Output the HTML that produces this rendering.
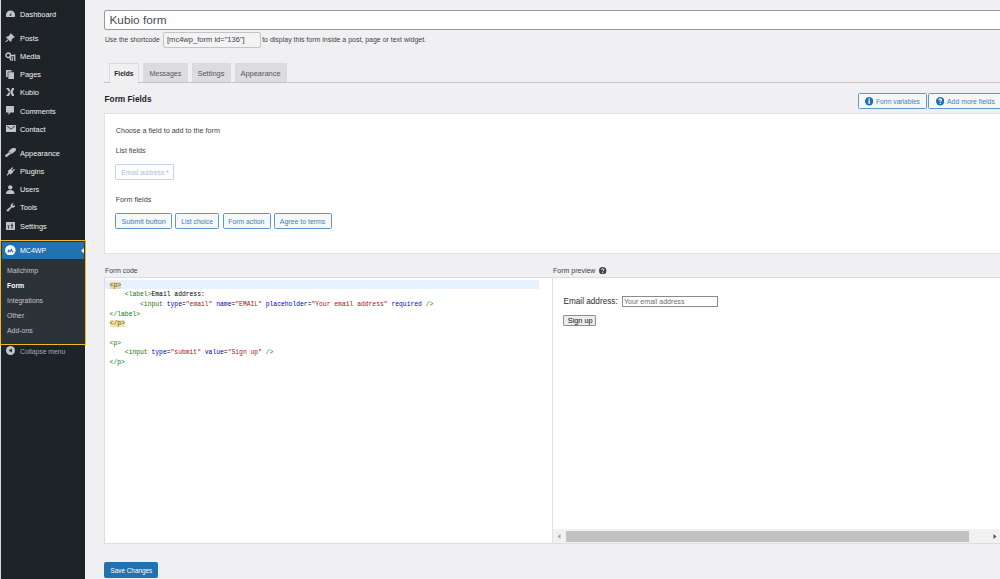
<!DOCTYPE html>
<html><head><meta charset="utf-8">
<style>
*{margin:0;padding:0;box-sizing:border-box}
html,body{width:1000px;height:579px;overflow:hidden;background:#f0f0f2;font-family:"Liberation Sans",sans-serif;position:relative}
.a{position:absolute;white-space:nowrap}
#side{position:absolute;left:0;top:0;width:85.4px;height:579px;background:#1d2327}
.mi{position:absolute;left:20px;font-size:7.4px;color:#f0f0f1;line-height:10px;height:10px}
.ic{position:absolute;left:5px;width:10px;height:10px}
.sub{position:absolute;left:7px;font-size:6.9px;color:#c3c4c7;line-height:10px}
.t{color:#170}.at{color:#00c}.st{color:#a11}.mt{background:rgba(255,150,0,.3)}
</style></head><body>
<div id="side">
  <div class="mi" style="top:9.5px">Dashboard</div>
  <div class="mi" style="top:33.5px">Posts</div>
  <div class="mi" style="top:51.5px">Media</div>
  <div class="mi" style="top:69.5px">Pages</div>
  <div class="mi" style="top:88px">Kubio</div>
  <div class="mi" style="top:106.5px">Comments</div>
  <div class="mi" style="top:124.5px">Contact</div>
  <div class="mi" style="top:149px">Appearance</div>
  <div class="mi" style="top:166.5px">Plugins</div>
  <div class="mi" style="top:185px">Users</div>
  <div class="mi" style="top:203px">Tools</div>
  <div class="mi" style="top:221.5px">Settings</div>
</div>
<!-- MC4WP block -->
<div class="a" style="left:0;top:240.4px;width:85.9px;height:104.6px;border:1.8px solid #ecb82a;background:#2c3338"></div>
<div class="a" style="left:1.8px;top:242.2px;width:82.3px;height:17.1px;background:#2271b1"></div>
<svg class="a" style="left:81.2px;top:247.5px" width="3" height="5.4" viewBox="0 0 4 7" preserveAspectRatio="none"><path d="M4 0 L0 3.5 L4 7 Z" fill="#f0f0f1"/></svg>
<div class="mi" style="top:245.5px;color:#fff;font-size:7px">MC4WP</div>
<div class="sub" style="top:266.4px">Mailchimp</div>
<div class="sub" style="top:281.4px;color:#fff;font-weight:bold">Form</div>
<div class="sub" style="top:296px">Integrations</div>
<div class="sub" style="top:311.4px">Other</div>
<div class="sub" style="top:326px">Add-ons</div>
<div class="mi" style="top:347px;color:#a7aaad;font-size:6.8px">Collapse menu</div>

<svg class="a" style="left:5.9px;top:9.6px" width="9" height="7.6" viewBox="0 0 18 15" preserveAspectRatio="none"><path d="M0 10 A9 9 0 0 1 18 10 L18 12 Q18 15 15 15 L3 15 Q0 15 0 12 Z" fill="#c4c6c9"/><circle cx="9" cy="10" r="2" fill="#1d2327" opacity="0.8"/><path d="M9 9 L11.5 4" stroke="#1d2327" stroke-width="1.3" opacity="0.6"/></svg>
<svg class="a" style="left:5.2px;top:32.6px" width="10.00" height="9.70" viewBox="0 0 20 20" preserveAspectRatio="none"><path d="M11 0 L20 9 L17 10 L13 14 L13 17 L11 18 L2 9 L3 7 L6 7 L10 3 Z" fill="#bfc1c4"/><path d="M6.5 13.5 L0.5 19.5" stroke="#bfc1c4" stroke-width="2.2"/></svg>
<svg class="a" style="left:5.2px;top:52.1px" width="10.5" height="9.5" viewBox="0 0 21 19" preserveAspectRatio="none"><circle cx="6.5" cy="6.5" r="4.6" stroke="#c4c6c9" stroke-width="2.8" fill="none"/><path d="M9.5 10 L11.5 17" stroke="#c4c6c9" stroke-width="2.6"/><path d="M12 7.5 L19.5 6.5 L19.5 18" stroke="#c4c6c9" stroke-width="2.6" fill="none"/><path d="M14.5 10 L14.5 18" stroke="#c4c6c9" stroke-width="2.4"/></svg>
<svg class="a" style="left:5.7px;top:69.7px" width="8.50" height="9.50" viewBox="0 0 17 20" preserveAspectRatio="none"><path d="M0 0 L11 0 L11 15 L0 15 Z" fill="#bfc1c4"/><path d="M4 4 L17 4 L17 20 L4 20 Z" fill="#bfc1c4" stroke="#1d2327" stroke-width="1.2"/></svg>
<svg class="a" style="left:5.5px;top:88.2px" width="8.70" height="8.10" viewBox="0 0 18 18" preserveAspectRatio="none"><path d="M0 0 L6 0 L9 6 L6.5 9 Z M0 18 L6 18 L9 12 L6.5 9 Z" fill="#bfc1c4"/><path d="M18 0 L12.5 0 L8.5 9 L12.5 18 L18 18 L13.5 9 Z" fill="#bfc1c4"/></svg>
<svg class="a" style="left:6.1px;top:105.9px" width="8.00" height="8.90" viewBox="0 0 16 18" preserveAspectRatio="none"><path d="M0 0 L16 0 L16 13 L9 13 L5 18 L5 13 L0 13 Z" fill="#bfc1c4"/></svg>
<svg class="a" style="left:5.8px;top:124.5px" width="10.00" height="7.50" viewBox="0 0 20 15" preserveAspectRatio="none"><rect x="0" y="0" width="20" height="15" fill="#bfc1c4"/><path d="M2 2 L10 8 L18 2" stroke="#1d2327" stroke-width="1.6" fill="none"/></svg>
<svg class="a" style="left:5.1px;top:147.9px" width="10.7" height="9.3" viewBox="0 0 20 18" preserveAspectRatio="none"><path d="M11 7.5 L16.5 3" stroke="#bfc1c4" stroke-width="8" stroke-linecap="round"/><path d="M2.5 15 L9 10" stroke="#bfc1c4" stroke-width="4.5" stroke-linecap="round"/><path d="M8.5 7 L11.5 11" stroke="#1d2327" stroke-width="1"/></svg>
<svg class="a" style="left:6.1px;top:166.6px" width="9" height="9.3" viewBox="0 0 18 18" preserveAspectRatio="none"><g transform="rotate(45 9 9)"><rect x="4.5" y="5" width="9" height="8" rx="2" fill="#bfc1c4"/><rect x="5.5" y="0" width="2.2" height="5.5" fill="#bfc1c4"/><rect x="10.3" y="0" width="2.2" height="5.5" fill="#bfc1c4"/><rect x="7.8" y="12" width="2.4" height="7" fill="#bfc1c4"/></g></svg>
<svg class="a" style="left:6.3px;top:184.7px" width="8.50" height="9.00" viewBox="0 0 18 19" preserveAspectRatio="none"><circle cx="9" cy="5" r="4.6" fill="#bfc1c4"/><path d="M0 19 Q0 10.5 9 10.5 Q18 10.5 18 19 Z" fill="#bfc1c4"/></svg>
<svg class="a" style="left:5.8px;top:202.7px" width="9.5" height="9.1" viewBox="0 0 19 19" preserveAspectRatio="none"><path d="M16 0 A6 6 0 0 0 9.5 7.5 L0.5 15 L4 18.5 L11.5 9.5 A6 6 0 0 0 19 3 L16 5.5 L13.5 5 L13 2.5 Z" fill="#bfc1c4"/></svg>
<svg class="a" style="left:6.3px;top:221.7px" width="9.00" height="8.10" viewBox="0 0 18 16" preserveAspectRatio="none"><rect x="0" y="0" width="18" height="16" fill="#bfc1c4"/><rect x="4" y="9" width="1.8" height="4" fill="#1d2327"/><rect x="11" y="3" width="1.8" height="10" fill="#1d2327"/><rect x="3" y="7" width="4" height="1.8" fill="#1d2327"/><rect x="10" y="6" width="4" height="1.8" fill="#1d2327"/></svg>
<svg class="a" style="left:5.15px;top:244.65px" width="10.60" height="10.60" viewBox="0 0 20 20" preserveAspectRatio="none"><circle cx="10" cy="10" r="10" fill="#fff"/><path d="M4.5 14 L7 7.5 L9.5 11 L12 6 L16 13 L13.5 13.5 L12 10.5 L10 14 L8 12 L7 14 Z" fill="#2271b1"/></svg>
<svg class="a" style="left:5.85px;top:346.3px" width="9.00" height="9.00" viewBox="0 0 20 20" preserveAspectRatio="none"><circle cx="10" cy="10" r="10" fill="#c3c4c7"/><path d="M13 5.5 L6 10 L13 14.5 Z" fill="#1d2327"/></svg>
<div class="a" style="left:0;top:0;width:1.2px;height:240.5px;background:#d6d7d8"></div><div class="a" style="left:0;top:345px;width:1.2px;height:234px;background:#d6d7d8"></div>
<!-- title -->
<div class="a" style="left:104px;top:10px;width:900px;height:19.6px;background:#fff;border:1px solid #979a9e;border-radius:2px"></div>
<div class="a" style="left:109.5px;top:13.4px;font-size:11.8px;color:#474d53;line-height:14px">Kubio form</div>
<div class="a" style="left:105px;top:35px;font-size:6.75px;color:#3c434a;line-height:9px">Use the shortcode</div>
<div class="a" style="left:162.5px;top:31.5px;width:98px;height:16px;border:1px solid #c3c4c7;border-radius:2px;background:#f3f3f4"></div>
<div class="a" style="left:167px;top:35px;font-size:7.55px;color:#3c434a;line-height:9px">[mc4wp_form id="136"]</div>
<div class="a" style="left:262.2px;top:35px;font-size:6.98px;color:#3c434a;line-height:9px">to display this form inside a post, page or text widget.</div>

<!-- tabs -->
<div class="a" style="left:104px;top:81.5px;width:900px;height:1px;background:#c3c4c7"></div>
<div class="a" style="left:108.5px;top:62.6px;width:30px;height:19.6px;background:#f0f0f1;border:1px solid #d9dadc;border-bottom:none"></div>
<div class="a" style="left:142.5px;top:62.6px;width:45px;height:19px;background:#dcdcde;border:1px solid #d9dadc;border-bottom:none"></div>
<div class="a" style="left:191.5px;top:62.6px;width:39px;height:19px;background:#dcdcde;border:1px solid #d9dadc;border-bottom:none"></div>
<div class="a" style="left:234.5px;top:62.6px;width:52px;height:19px;background:#dcdcde;border:1px solid #d9dadc;border-bottom:none"></div>
<div class="a" style="left:109.5px;top:81px;width:28px;height:2px;background:#f0f0f1"></div>
<div class="a" style="left:114.3px;top:69px;font-size:6.6px;font-weight:bold;color:#1d2327;line-height:9px">Fields</div>
<div class="a" style="left:149.5px;top:69px;font-size:6.95px;color:#50575e;line-height:9px">Messages</div>
<div class="a" style="left:197.4px;top:69px;font-size:7.5px;color:#50575e;line-height:9px">Settings</div>
<div class="a" style="left:240.5px;top:69px;font-size:7.44px;color:#50575e;line-height:9px">Appearance</div>

<div class="a" style="left:104.5px;top:92.8px;font-size:8.3px;font-weight:bold;color:#1d2327;line-height:12px">Form Fields</div>

<!-- form var buttons -->
<div class="a" style="left:857.5px;top:93.3px;width:69.5px;height:15.5px;border:1px solid #5f97cc;border-radius:1.5px;background:#f6f7f7"></div>
<div class="a" style="left:928px;top:93.3px;width:80px;height:15.5px;border:1px solid #5f97cc;border-radius:1.5px;background:#f6f7f7"></div>
<div class="a" style="left:876px;top:97px;font-size:6.65px;color:#3b7fbd;line-height:9px">Form variables</div>
<div class="a" style="left:947px;top:97px;font-size:6.9px;color:#3b7fbd;line-height:9px">Add more fields</div>

<!-- fields box -->
<div class="a" style="left:104px;top:113.1px;width:900px;height:141px;background:#fff;border:1px solid #e0e1e3"></div>
<div class="a" style="left:115.7px;top:126px;font-size:7.2px;color:#3c434a;line-height:9px">Choose a field to add to the form</div>
<div class="a" style="left:115.7px;top:145.5px;font-size:7.2px;color:#3c434a;line-height:9px">List fields</div>
<div class="a" style="left:114.9px;top:163.6px;width:59.2px;height:16.2px;border:1px solid #c3d5e8;border-radius:1px;background:#fff"></div>
<div class="a" style="left:121.3px;top:167.8px;font-size:6.8px;color:#a7c4e0;line-height:9px">Email address <span style="color:#e49a9a">*</span></div>
<div class="a" style="left:115.7px;top:195px;font-size:7.2px;color:#3c434a;line-height:9px">Form fields</div>
<div class="a" style="left:115px;top:213.2px;width:57px;height:15.5px;border:1px solid #5f97cc;border-radius:1.5px;background:#f6f7f7"></div>
<div class="a" style="left:175px;top:213.2px;width:44px;height:15.5px;border:1px solid #5f97cc;border-radius:1.5px;background:#f6f7f7"></div>
<div class="a" style="left:222.5px;top:213.2px;width:48px;height:15.5px;border:1px solid #5f97cc;border-radius:1.5px;background:#f6f7f7"></div>
<div class="a" style="left:274px;top:213.2px;width:57.5px;height:15.5px;border:1px solid #5f97cc;border-radius:1.5px;background:#f6f7f7"></div>
<div class="a" style="left:121.5px;top:217px;font-size:7.2px;color:#3b7fbd;line-height:9px">Submit button</div>
<div class="a" style="left:181.3px;top:217px;font-size:6.7px;color:#3b7fbd;line-height:9px">List choice</div>
<div class="a" style="left:228.3px;top:217px;font-size:6.82px;color:#3b7fbd;line-height:9px">Form action</div>
<div class="a" style="left:279.8px;top:217px;font-size:6.95px;color:#3b7fbd;line-height:9px">Agree to terms</div>

<!-- form code -->
<div class="a" style="left:105px;top:266px;font-size:6.8px;color:#3c434a;line-height:9px">Form code</div>
<div class="a" style="left:553px;top:266px;font-size:7px;color:#3c434a;line-height:9px">Form preview</div>
<div class="a" style="left:104px;top:276.6px;width:900px;height:267.3px;background:#fff;border:1px solid #dcdde0"></div>
<div class="a" style="left:105px;top:280.1px;width:433.7px;height:8.8px;background:#e8f2fe"></div>
<div class="a" style="left:552px;top:277px;width:1px;height:266px;background:#e1e2e4"></div>


<div class="a" style="left:109.6px;top:280.5px;font-family:'Liberation Mono',monospace;font-size:6.35px;line-height:9.7px;color:#000;white-space:pre" id="code"><span class="t mt">&lt;p&gt;</span>
    <span class="t">&lt;label&gt;</span>Email address:
        <span class="t">&lt;input</span> <span class="at">type</span>=<span class="st">"email"</span> <span class="at">name</span>=<span class="st">"EMAIL"</span> <span class="at">placeholder</span>=<span class="st">"Your email address"</span> <span class="at">required</span> <span class="t">/&gt;</span>
<span class="t">&lt;/label&gt;</span>
<span class="t mt">&lt;/p&gt;</span>

<span class="t">&lt;p&gt;</span>
    <span class="t">&lt;input</span> <span class="at">type</span>=<span class="st">"submit"</span> <span class="at">value</span>=<span class="st">"Sign up"</span> <span class="t">/&gt;</span>
<span class="t">&lt;/p&gt;</span></div>

<!-- preview -->
<div class="a" style="left:563.5px;top:295.8px;font-size:8.2px;color:#2b2b2b;line-height:11px">Email address:</div>
<div class="a" style="left:622px;top:296.4px;width:96px;height:10.2px;border:1px solid #8a8a8a;background:#fff"></div>
<div class="a" style="left:624px;top:297.6px;font-size:7.1px;color:#6f6f6f;line-height:8px">Your email address</div>
<div class="a" style="left:563.4px;top:315.4px;width:32.2px;height:10.2px;border:1px solid #8f8f8f;background:#ececec;border-radius:1px"></div>
<div class="a" style="left:567.8px;top:316.3px;font-size:7.3px;color:#111;line-height:9px">Sign up</div>

<!-- scrollbar -->
<div class="a" style="left:553px;top:529.3px;width:447px;height:13.7px;background:#f1f1f1"></div>
<div class="a" style="left:566px;top:531px;width:402.6px;height:10.8px;background:#c1c1c1"></div>


<svg class="a" style="left:864.6px;top:97.4px" width="8.4" height="8.4" viewBox="0 0 20 20"><circle cx="10" cy="10" r="10" fill="#2271b1"/><rect x="8.3" y="8" width="3.4" height="8" fill="#fff"/><circle cx="10" cy="5" r="1.9" fill="#fff"/></svg>
<svg class="a" style="left:935.6px;top:97.4px" width="8.4" height="8.4" viewBox="0 0 20 20"><circle cx="10" cy="10" r="10" fill="#2271b1"/><path d="M7 7.5 Q7 4.5 10 4.5 Q13 4.5 13 7.2 Q13 9 11 10 Q10.2 10.5 10.2 12" stroke="#fff" stroke-width="2.6" fill="none"/><circle cx="10.2" cy="15.3" r="1.6" fill="#fff"/></svg>
<svg class="a" style="left:599.3px;top:266.5px" width="7.4" height="7.4" viewBox="0 0 20 20"><circle cx="10" cy="10" r="10" fill="#3c434a"/><path d="M7 7.5 Q7 4.5 10 4.5 Q13 4.5 13 7.2 Q13 9 11 10 Q10.2 10.5 10.2 12" stroke="#fff" stroke-width="2.6" fill="none"/><circle cx="10.2" cy="15.3" r="1.6" fill="#fff"/></svg>
<svg class="a" style="left:557px;top:534px" width="4" height="5" viewBox="0 0 4 5"><path d="M3.5 0 L0.5 2.5 L3.5 5 Z" fill="#a3a3a3"/></svg>
<svg class="a" style="left:993px;top:534px" width="4" height="5" viewBox="0 0 4 5"><path d="M0.5 0 L3.5 2.5 L0.5 5 Z" fill="#505050"/></svg>

<!-- save -->
<div class="a" style="left:104px;top:562px;width:54px;height:16px;background:#2271b1;border-radius:2px"></div>
<div class="a" style="left:110.4px;top:565.5px;font-size:6.4px;color:#fff;line-height:9px">Save Changes</div>
</body></html>
